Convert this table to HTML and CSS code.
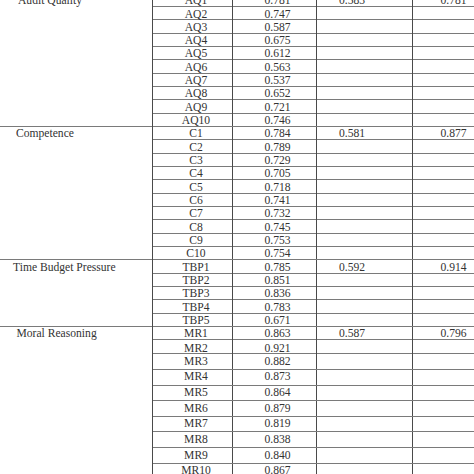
FILE: index.html
```html
<!DOCTYPE html>
<html>
<head>
<meta charset="utf-8">
<link rel="stylesheet" href="styles.css">
</head>
<body>
<div class="sheet">
  <div class="group">
    <div class="label label-aq">Audit Quality</div>
    <div class="rows">
      <div class="row"><span class="c2">AQ1</span><span class="c3">0.781</span><span class="c4">0.583</span><span class="c5">0.781</span></div>
      <div class="row"><span class="c2">AQ2</span><span class="c3">0.747</span><span class="c4"></span><span class="c5"></span></div>
      <div class="row"><span class="c2">AQ3</span><span class="c3">0.587</span><span class="c4"></span><span class="c5"></span></div>
      <div class="row"><span class="c2">AQ4</span><span class="c3">0.675</span><span class="c4"></span><span class="c5"></span></div>
      <div class="row"><span class="c2">AQ5</span><span class="c3">0.612</span><span class="c4"></span><span class="c5"></span></div>
      <div class="row"><span class="c2">AQ6</span><span class="c3">0.563</span><span class="c4"></span><span class="c5"></span></div>
      <div class="row"><span class="c2">AQ7</span><span class="c3">0.537</span><span class="c4"></span><span class="c5"></span></div>
      <div class="row"><span class="c2">AQ8</span><span class="c3">0.652</span><span class="c4"></span><span class="c5"></span></div>
      <div class="row"><span class="c2">AQ9</span><span class="c3">0.721</span><span class="c4"></span><span class="c5"></span></div>
      <div class="row"><span class="c2">AQ10</span><span class="c3">0.746</span><span class="c4"></span><span class="c5"></span></div>
    </div>
  </div>
  <div class="group">
    <div class="label">Competence</div>
    <div class="rows">
      <div class="row"><span class="c2">C1</span><span class="c3">0.784</span><span class="c4">0.581</span><span class="c5">0.877</span></div>
      <div class="row"><span class="c2">C2</span><span class="c3">0.789</span><span class="c4"></span><span class="c5"></span></div>
      <div class="row"><span class="c2">C3</span><span class="c3">0.729</span><span class="c4"></span><span class="c5"></span></div>
      <div class="row"><span class="c2">C4</span><span class="c3">0.705</span><span class="c4"></span><span class="c5"></span></div>
      <div class="row"><span class="c2">C5</span><span class="c3">0.718</span><span class="c4"></span><span class="c5"></span></div>
      <div class="row"><span class="c2">C6</span><span class="c3">0.741</span><span class="c4"></span><span class="c5"></span></div>
      <div class="row"><span class="c2">C7</span><span class="c3">0.732</span><span class="c4"></span><span class="c5"></span></div>
      <div class="row"><span class="c2">C8</span><span class="c3">0.745</span><span class="c4"></span><span class="c5"></span></div>
      <div class="row"><span class="c2">C9</span><span class="c3">0.753</span><span class="c4"></span><span class="c5"></span></div>
      <div class="row"><span class="c2">C10</span><span class="c3">0.754</span><span class="c4"></span><span class="c5"></span></div>
    </div>
  </div>
  <div class="group">
    <div class="label label-tbp">Time Budget Pressure</div>
    <div class="rows">
      <div class="row"><span class="c2">TBP1</span><span class="c3">0.785</span><span class="c4">0.592</span><span class="c5">0.914</span></div>
      <div class="row"><span class="c2">TBP2</span><span class="c3">0.851</span><span class="c4"></span><span class="c5"></span></div>
      <div class="row"><span class="c2">TBP3</span><span class="c3">0.836</span><span class="c4"></span><span class="c5"></span></div>
      <div class="row"><span class="c2">TBP4</span><span class="c3">0.783</span><span class="c4"></span><span class="c5"></span></div>
      <div class="row"><span class="c2">TBP5</span><span class="c3">0.671</span><span class="c4"></span><span class="c5"></span></div>
    </div>
  </div>
  <div class="group">
    <div class="label label-mr">Moral Reasoning</div>
    <div class="rows">
      <div class="row"><span class="c2">MR1</span><span class="c3">0.863</span><span class="c4">0.587</span><span class="c5">0.796</span></div>
      <div class="row row-mid"><span class="c2">MR2</span><span class="c3">0.921</span><span class="c4"></span><span class="c5"></span></div>
      <div class="row row-tall"><span class="c2">MR3</span><span class="c3">0.882</span><span class="c4"></span><span class="c5"></span></div>
      <div class="row row-tall"><span class="c2">MR4</span><span class="c3">0.873</span><span class="c4"></span><span class="c5"></span></div>
      <div class="row row-tall"><span class="c2">MR5</span><span class="c3">0.864</span><span class="c4"></span><span class="c5"></span></div>
      <div class="row row-tall"><span class="c2">MR6</span><span class="c3">0.879</span><span class="c4"></span><span class="c5"></span></div>
      <div class="row row-tall"><span class="c2">MR7</span><span class="c3">0.819</span><span class="c4"></span><span class="c5"></span></div>
      <div class="row row-tall"><span class="c2">MR8</span><span class="c3">0.838</span><span class="c4"></span><span class="c5"></span></div>
      <div class="row row-tall"><span class="c2">MR9</span><span class="c3">0.840</span><span class="c4"></span><span class="c5"></span></div>
      <div class="row row-tall"><span class="c2">MR10</span><span class="c3">0.867</span><span class="c4"></span><span class="c5"></span></div>
    </div>
  </div>
</div>
</body>
</html>
```

FILE: styles.css
```css
html, body {
  margin: 0;
  padding: 0;
  background: #ffffff;
  overflow: hidden;
}

.sheet {
  width: 494px;
  margin-top: -7.33px;
  font-family: "Liberation Serif", "Times New Roman", serif;
  font-size: 11.6px;
  color: #333333;
}

.group {
  display: grid;
  grid-template-columns: 152px 342px;
}

.label {
  box-sizing: border-box;
  border-top: 1px solid #7a7a7a;
  padding-left: 16px;
  padding-top: 1.5px;
  line-height: 12.33px;
  white-space: nowrap;
}

.label-aq {
  padding-left: 18px;
}

.label-tbp {
  padding-left: 13px;
}

.label-mr {
  padding-left: 16.5px;
}

.rows {
  border-left: 1px solid #4a4a4a;
}

.row {
  box-sizing: border-box;
  height: 13.33px;
  border-top: 1px solid #7a7a7a;
  display: grid;
  grid-template-columns: 79px 84px 96px 82px;
  line-height: 12.33px;
  white-space: nowrap;
}

.c2,
.c3,
.c4,
.c5 {
  display: block;
  box-sizing: border-box;
  text-align: center;
  padding-top: 1.5px;
}

.row-mid {
  height: 14px;
  line-height: 13px;
}

.row-tall {
  height: 15.67px;
  line-height: 13.2px;
}

.row-tall .c2,
.row-tall .c3,
.row-tall .c4,
.row-tall .c5 {
  padding-top: 0.5px;
}

.c2 {
  padding-left: 7px;
}

.c3 {
  border-left: 1px solid #4a4a4a;
  padding-left: 6px;
}

.c4 {
  border-left: 1px solid #4a4a4a;
  padding-right: 25px;
}

.c5 {
  border-left: 1px solid #4a4a4a;
}
```
